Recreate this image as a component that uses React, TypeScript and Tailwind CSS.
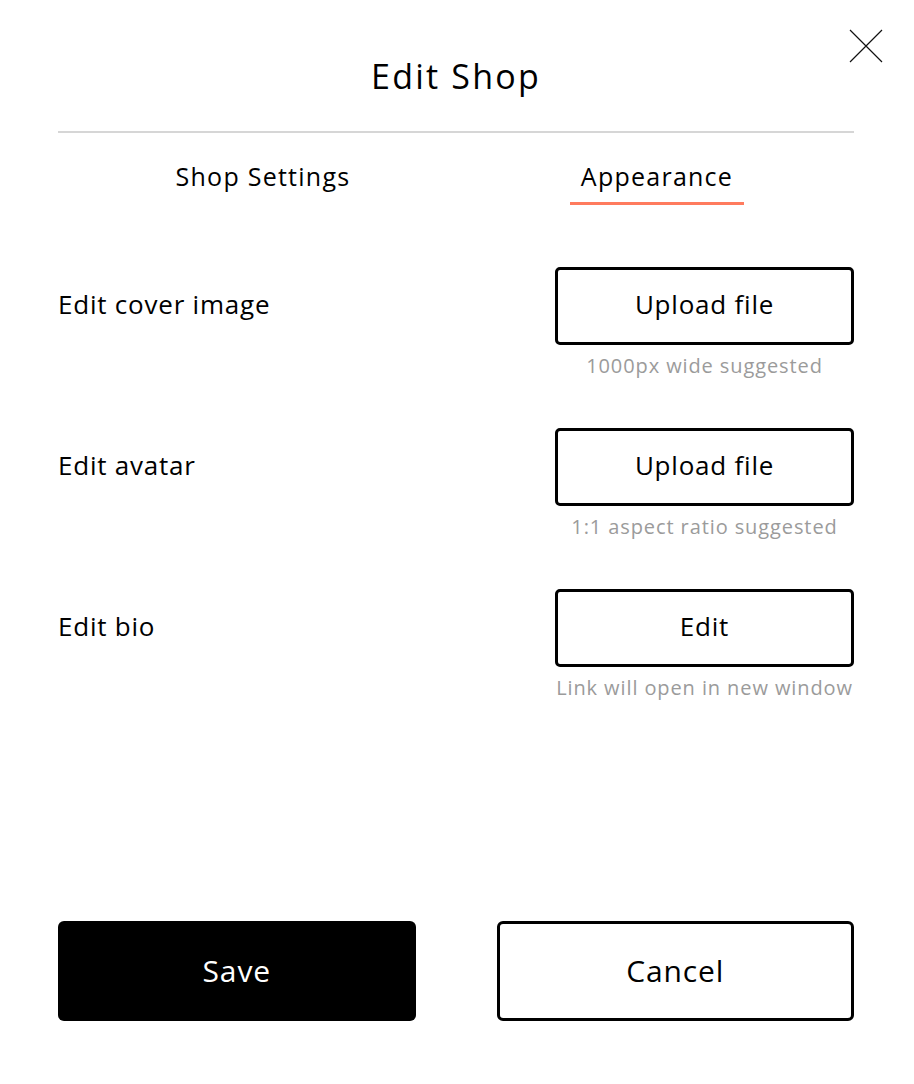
const rows = [
  { label: "Edit cover image", action: "Upload file", hint: "1000px wide suggested" },
  { label: "Edit avatar", action: "Upload file", hint: "1:1 aspect ratio suggested" },
  { label: "Edit bio", action: "Edit", hint: "Link will open in new window" },
];

export default function App() {
  return (
    <div className="relative h-[1084px] w-[914px] bg-white pl-[58px] pr-[60px] text-black [font-family:'Open_Sans','Noto_Sans',sans-serif]">
      <button type="button" className="absolute left-[849px] top-[29px] h-[34px] w-[34px]">
        <svg viewBox="0 0 34 34" className="h-[34px] w-[34px]" fill="none" stroke="#111" strokeWidth={1.2}>
          <path d="M1 1 L33 33 M33 1 L1 33" />
        </svg>
      </button>

      <h1 className="pt-[51px] text-center text-[34px] font-medium leading-[50px] tracking-[0.065em]">Edit Shop</h1>
      <div className="mt-[30px] h-[2px] bg-[#d6d6d6]" />

      <div className="mt-[27px] grid grid-cols-2 pl-[8px] text-[25px] leading-[32px] tracking-[0.05em]">
        <div className="flex justify-center">
          <span className="px-[9px] pb-[10px]">Shop Settings</span>
        </div>
        <div className="flex justify-center">
          <span className="border-b-[3px] border-[#ff7b5e] px-[11px] pb-[10px]">Appearance</span>
        </div>
      </div>

      <div className="mt-[62px] flex flex-col gap-[50px]">
        {rows.map((row) => (
          <div key={row.label} className="flex items-start justify-between">
            <span className="mt-[21px] text-[26px] leading-[32px] tracking-[0.03em]">{row.label}</span>
            <div className="flex w-[299px] flex-col items-center">
              <button type="button" className="h-[78px] w-full rounded-[5px] border-[3px] border-black pb-[3px] text-[26px] tracking-[0.03em]">
                {row.action}
              </button>
              <p className="mt-[9px] whitespace-nowrap text-[20px] leading-[24px] tracking-[0.045em] text-[#9b9b9b]">{row.hint}</p>
            </div>
          </div>
        ))}
      </div>

      <div className="mt-[221px] grid grid-cols-2 gap-[81px] text-[30px] tracking-[0.03em]">
        <button type="button" className="h-[100px] rounded-[6px] bg-black pb-[2px] text-white">Save</button>
        <button type="button" className="h-[100px] rounded-[6px] border-[3px] border-black pb-[2px]">Cancel</button>
      </div>
    </div>
  );
}
